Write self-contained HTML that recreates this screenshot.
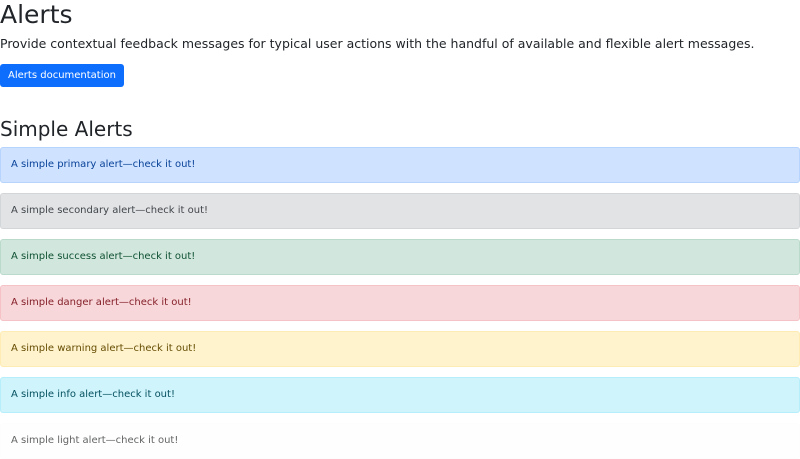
<!DOCTYPE html>
<html><head><style>
body{margin:0;font-family:"DejaVu Sans","Liberation Sans",sans-serif;color:#212529;background:#fff;width:800px;height:450px;overflow:hidden}
h1{font-size:25px;font-weight:400;margin:0;line-height:30px;position:absolute;top:0;left:0;white-space:nowrap}
p{position:absolute;top:35px;left:0;margin:0;font-size:12.5px;line-height:18px;white-space:nowrap}
.btn{position:absolute;top:64px;left:0;width:124px;height:23px;background:#0d6efd;color:#fff;border-radius:3px;font-size:10px;line-height:23px;text-align:center;white-space:nowrap}
h2{position:absolute;top:116px;left:0;margin:0;font-size:20px;font-weight:400;line-height:26px}
.a{position:absolute;left:0;height:34px;border:1px solid;border-radius:3px;font-size:10px;line-height:34px;padding-left:10px;box-sizing:content-box;width:788px;white-space:nowrap}
</style></head><body>
<h1>Alerts</h1>
<p>Provide contextual feedback messages for typical user actions with the handful of available and flexible alert messages.</p>
<div class="btn">Alerts documentation</div>
<h2>Simple Alerts</h2>
<div class="a" style="top:147px;background:#cfe2ff;border-color:#b6d4fe;color:#084298">A simple primary alert—check it out!</div>
<div class="a" style="top:193px;background:#e2e3e5;border-color:#d3d6d8;color:#41464b">A simple secondary alert—check it out!</div>
<div class="a" style="top:239px;background:#d1e7dd;border-color:#badbcc;color:#0f5132">A simple success alert—check it out!</div>
<div class="a" style="top:285px;background:#f8d7da;border-color:#f5c2c7;color:#842029">A simple danger alert—check it out!</div>
<div class="a" style="top:331px;background:#fff3cd;border-color:#ffecb5;color:#664d03">A simple warning alert—check it out!</div>
<div class="a" style="top:377px;background:#cff4fc;border-color:#b6effb;color:#055160">A simple info alert—check it out!</div>
<div class="a" style="top:423px;background:#fefefe;border-color:#fdfdfe;color:#636464">A simple light alert—check it out!</div>
</body></html>
